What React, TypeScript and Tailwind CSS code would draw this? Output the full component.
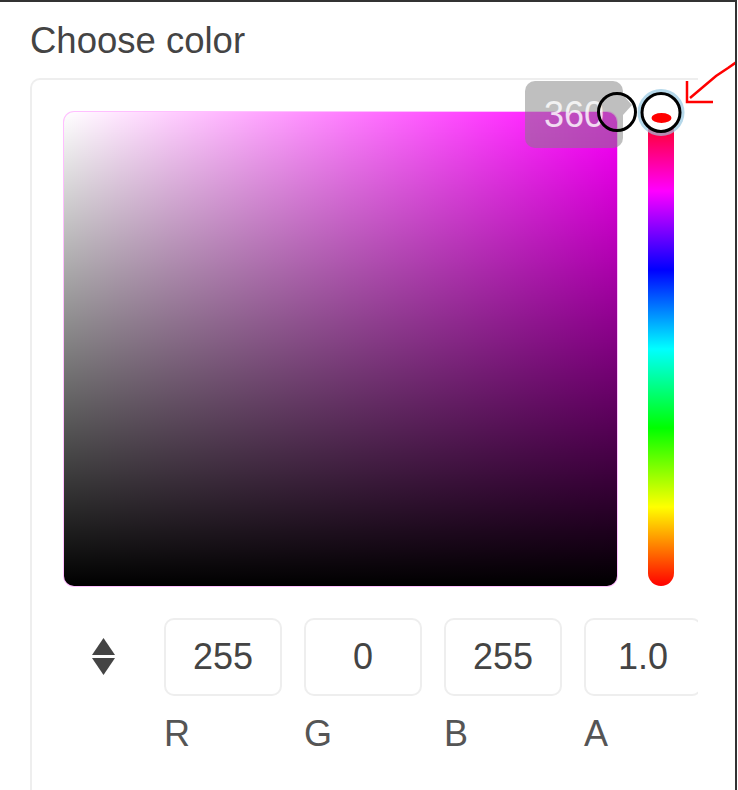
import React from "react";

export default function App() {
  const fields = [
    { v: "255", l: "R" },
    { v: "0", l: "G" },
    { v: "255", l: "B" },
    { v: "1.0", l: "A" },
  ];
  return (
    <div className="relative w-[737px] h-[790px] overflow-hidden bg-white border-t-2 border-r-2 border-[#333] font-['Liberation_Sans',Arial,sans-serif]">
      <h1 className="ml-[30px] mt-[21px] text-[36.5px] leading-[36px] text-[#444] font-normal">
        Choose color
      </h1>
      <div className="ml-[30px] mt-[19px] w-[668px] h-[720px] overflow-hidden border-t-2 border-l-2 border-[#eee] rounded-tl-[10px] pt-[32px] pl-[32px]">
        <div className="flex items-start gap-[31px]">
          <div className="relative w-[553px] h-[474px] shrink-0 rounded-[10px] shadow-[0_0_0_1px_rgba(255,0,255,0.25)] bg-[#f0f] bg-[image:linear-gradient(to_top,#000,rgba(0,0,0,0)),linear-gradient(to_right,#fff,rgba(255,255,255,0))]">
            <div className="absolute left-[461px] top-[-31px] w-[98px] h-[67px] rounded-[10px] bg-[rgba(128,128,128,0.5)] flex items-center justify-center">
              <span className="text-[36px] leading-none text-white/80">360</span>
              <div className="absolute right-[-9px] top-[14px] w-0 h-0 border-y-[10px] border-y-transparent border-l-[9px] border-l-[rgba(128,128,128,0.5)]" />
            </div>
            <div className="absolute right-[-20px] top-[-20px] w-[40px] h-[40px] rounded-full border-[3px] border-black" />
          </div>
          <div className="relative w-[26px] h-[474px] shrink-0 rounded-full bg-[linear-gradient(to_bottom,#f00,#f0f,#00f,#0ff,#0f0,#ff0,#f00)]">
            <div className="absolute left-1/2 top-[-20px] -translate-x-1/2 w-[41px] h-[41px] rounded-full bg-white border-[3px] border-black shadow-[0_0_0_3px_rgba(150,200,225,0.7)] flex items-center justify-center">
              <div className="mt-[10px] w-[20px] h-[10px] rounded-[50%] bg-[#f00]" />
            </div>
          </div>
        </div>
        <div className="mt-[32px] flex items-start">
          <div className="w-[100px] h-[78px] shrink-0 flex items-center pl-[28px]">
            <svg width="23" height="38" viewBox="0 0 23 38">
              <polygon points="11.5,0 23,17 0,17" fill="#444" />
              <polygon points="0,20 23,20 11.5,37" fill="#444" />
            </svg>
          </div>
          <div className="flex gap-[22px]">
            {fields.map((f) => (
              <div key={f.l} className="w-[118px] shrink-0 flex flex-col">
                <div className="h-[78px] rounded-[10px] border-2 border-[#eee] flex items-center justify-center text-[36px] leading-none text-[#444]">
                  {f.v}
                </div>
                <div className="mt-[20px] text-[36px] leading-[36px] text-[#555]">{f.l}</div>
              </div>
            ))}
          </div>
        </div>
      </div>
      <svg
        className="absolute left-0 top-[-2px] pointer-events-none"
        width="738"
        height="130"
        viewBox="0 0 738 130"
      >
        <path d="M738 61 L728 68 L716 76 L703 87 L690 98" stroke="#f00" strokeWidth="2.5" fill="none" />
        <path d="M687 81 L687 102 L713 102" stroke="#f00" strokeWidth="2.5" fill="none" />
      </svg>
    </div>
  );
}
